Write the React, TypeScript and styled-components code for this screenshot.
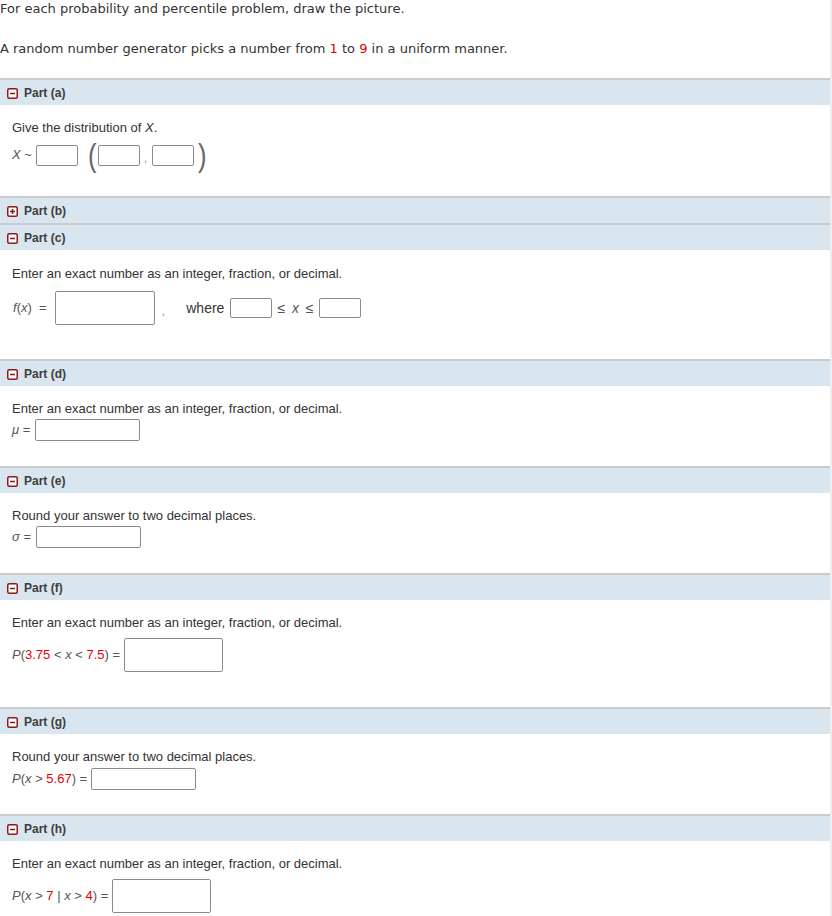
import styled, { createGlobalStyle } from "styled-components";

const GlobalStyle = createGlobalStyle`
  html, body {
    margin: 0;
    padding: 0;
    overflow: hidden;
    background: #ffffff;
  }
`;

const Page = styled.div`
  width: 830px;
  min-height: 916px;
  padding-top: 1px;
  border-right: 2px solid #efefef;
  font-family: "Liberation Sans", Arial, sans-serif;
  color: #333333;
`;

const Intro = styled.p<{ $gap: number }>`
  margin: 0 0 ${(p) => p.$gap}px;
  font-family: "DejaVu Sans", Verdana, sans-serif;
  font-size: 13px;
  line-height: 16px;
  color: #333333;
`;

const Num = styled.span`
  color: #e60000;
  font-style: normal;
`;

const Header = styled.div`
  display: flex;
  align-items: center;
  gap: 6px;
  height: 25px;
  padding-left: 7px;
  border-top: 2px solid #cbcbcb;
  background: #d9e5ef;
  font-size: 12px;
  font-weight: bold;
  color: #3d3d3d;
`;

const ToggleIcon = styled.svg`
  display: block;
  width: 11px;
  height: 11px;
  margin-top: 1px;
  flex-shrink: 0;
`;

const Body = styled.div<{ $top?: number; $bottom: number }>`
  padding: ${(p) => p.$top ?? 15}px 12px ${(p) => p.$bottom}px;
  font-size: 13px;
  line-height: 16px;
`;

const Prompt = styled.div`
  height: 16px;
  white-space: nowrap;
`;

const AnswerRow = styled.div<{ $top: number; $height: number }>`
  display: flex;
  align-items: center;
  margin-top: ${(p) => p.$top}px;
  height: ${(p) => p.$height}px;
  white-space: nowrap;
`;

const Math = styled.span`
  color: #555555;
  margin-right: 4px;
`;

const Var = styled.i`
  font-style: italic;
`;

const Blank = styled.input<{ $w: number; $h: number }>`
  box-sizing: border-box;
  flex-shrink: 0;
  width: ${(p) => p.$w}px;
  height: ${(p) => p.$h}px;
  margin: 0;
  padding: 0 3px;
  border: 1px solid #8c8c8c;
  border-radius: 2px;
  background: #ffffff;
  font: inherit;
  outline: none;
`;

const Paren = styled.span<{ $side: "left" | "right" }>`
  font-size: 32px;
  line-height: 34px;
  font-weight: 100;
  color: #666666;
  margin: ${(p) => (p.$side === "left" ? "0 0 0 9px" : "0 0 0 3px")};
  transform: scaleX(0.8);
`;

const Sep = styled.span<{ $space: number }>`
  display: inline-block;
  width: ${(p) => p.$space}px;
  text-align: center;
  color: #888888;
  font-size: 11px;
  padding-top: 6px;
`;

const Where = styled.span`
  margin: 0 6px 0 15px;
  font-size: 14px;
  color: #333333;
`;

const Ineq = styled.span`
  margin: 0 5px;
  font-size: 14px;
  word-spacing: 3px;
  color: #555555;
`;

const Toggle = ({ open }: { open: boolean }) => (
  <ToggleIcon viewBox="0 0 11 11">
    <rect x="0.75" y="0.75" width="9.5" height="9.5" rx="1.5" fill="#ffffff" stroke="#8b1a1a" strokeWidth="1.5" />
    <line x1="3" y1="5.5" x2="8" y2="5.5" stroke="#8b1a1a" strokeWidth="1.5" />
    {!open && <line x1="5.5" y1="3" x2="5.5" y2="8" stroke="#8b1a1a" strokeWidth="1.5" />}
  </ToggleIcon>
);

const PartHeader = ({ label, open = true }: { label: string; open?: boolean }) => (
  <Header>
    <Toggle open={open} />
    <span>Part ({label})</span>
  </Header>
);

const EXACT = "Enter an exact number as an integer, fraction, or decimal.";
const ROUND = "Round your answer to two decimal places.";

export default function App() {
  return (
    <Page>
      <GlobalStyle />
      <Intro $gap={24}>For each probability and percentile problem, draw the picture.</Intro>
      <Intro $gap={21}>
        A random number generator picks a number from <Num>1</Num> to <Num>9</Num> in a uniform manner.
      </Intro>

      <PartHeader label="a" />
      <Body $bottom={24}>
        <Prompt>
          Give the distribution of <Var>X</Var>.
        </Prompt>
        <AnswerRow $top={2} $height={34}>
          <Math>
            <Var>X</Var> ~
          </Math>
          <Blank $w={42} $h={21} />
          <Paren $side="left">(</Paren>
          <Blank $w={42} $h={21} />
          <Sep $space={12}>,</Sep>
          <Blank $w={42} $h={21} />
          <Paren $side="right">)</Paren>
        </AnswerRow>
      </Body>

      <PartHeader label="b" open={false} />
      <PartHeader label="c" />
      <Body $top={16} $bottom={34}>
        <Prompt>{EXACT}</Prompt>
        <AnswerRow $top={9} $height={34}>
          <Math style={{ marginLeft: 1, marginRight: 5 }}>
            <Var>f</Var>(<Var>x</Var>)&nbsp; =&nbsp;
          </Math>
          <Blank $w={100} $h={34} />
          <Sep $space={16}>,</Sep>
          <Where>where</Where>
          <Blank $w={42} $h={20} />
          <Ineq>
            ≤ <Var>x</Var> ≤
          </Ineq>
          <Blank $w={42} $h={20} />
        </AnswerRow>
      </Body>

      <PartHeader label="d" />
      <Body $bottom={25}>
        <Prompt>{EXACT}</Prompt>
        <AnswerRow $top={2} $height={22}>
          <Math style={{ marginRight: 5 }}>
            <Var>μ</Var> =
          </Math>
          <Blank $w={105} $h={22} />
        </AnswerRow>
      </Body>

      <PartHeader label="e" />
      <Body $bottom={25}>
        <Prompt>{ROUND}</Prompt>
        <AnswerRow $top={2} $height={22}>
          <Math style={{ marginRight: 5 }}>
            <Var>σ</Var> =
          </Math>
          <Blank $w={105} $h={22} />
        </AnswerRow>
      </Body>

      <PartHeader label="f" />
      <Body $bottom={35}>
        <Prompt>{EXACT}</Prompt>
        <AnswerRow $top={7} $height={34}>
          <Math>
            <Var>P</Var>(<Num>3.75</Num> &lt; <Var>x</Var> &lt; <Num>7.5</Num>) =
          </Math>
          <Blank $w={99} $h={34} />
        </AnswerRow>
      </Body>

      <PartHeader label="g" />
      <Body $bottom={24}>
        <Prompt>{ROUND}</Prompt>
        <AnswerRow $top={3} $height={22}>
          <Math>
            <Var>P</Var>(<Var>x</Var> &gt; <Num>5.67</Num>) =
          </Math>
          <Blank $w={105} $h={22} />
        </AnswerRow>
      </Body>

      <PartHeader label="h" />
      <Body $bottom={25}>
        <Prompt>{EXACT}</Prompt>
        <AnswerRow $top={7} $height={34}>
          <Math>
            <Var>P</Var>(<Var>x</Var> &gt; <Num>7</Num> | <Var>x</Var> &gt; <Num>4</Num>) =
          </Math>
          <Blank $w={99} $h={34} />
        </AnswerRow>
      </Body>
    </Page>
  );
}
